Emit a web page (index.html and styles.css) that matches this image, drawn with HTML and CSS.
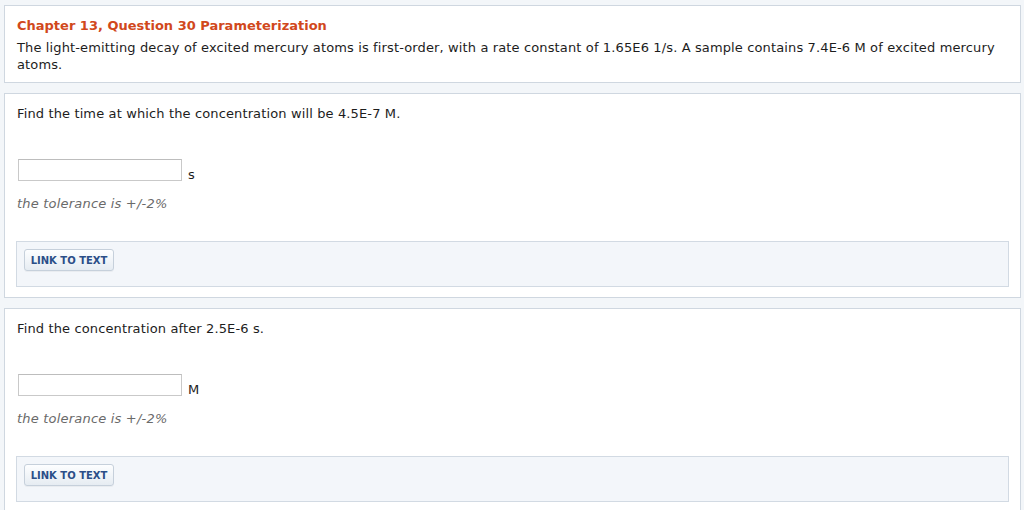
FILE: index.html
```html
<!DOCTYPE html>
<html>
<head>
<meta charset="utf-8">
<link rel="stylesheet" href="styles.css">
</head>
<body>
<div class="page">
  <section class="box intro">
    <h1 class="title">Chapter 13, Question 30 Parameterization</h1>
    <p class="text">The light-emitting decay of excited mercury atoms is first-order, with a rate constant of 1.65E6 1/s. A sample contains 7.4E-6 M of excited mercury atoms.</p>
  </section>

  <section class="box part">
    <p class="question">Find the time at which the concentration will be 4.5E-7 M.</p>
    <div class="answer">
      <input class="field" type="text">
      <span class="unit">s</span>
    </div>
    <p class="tolerance">the tolerance is +/-2%</p>
    <div class="links">
      <button class="link-btn">LINK TO TEXT</button>
    </div>
  </section>

  <section class="box part">
    <p class="question">Find the concentration after 2.5E-6 s.</p>
    <div class="answer">
      <input class="field" type="text">
      <span class="unit">M</span>
    </div>
    <p class="tolerance">the tolerance is +/-2%</p>
    <div class="links">
      <button class="link-btn">LINK TO TEXT</button>
    </div>
  </section>
</div>
</body>
</html>
```

FILE: styles.css
```css
html, body {
  margin: 0;
  padding: 0;
  background: #f3f6f9;
  font-family: Verdana, "DejaVu Sans", sans-serif;
  font-size: 13px;
  line-height: 17px;
  color: #1d1d1d;
}

.page {
  padding: 5px 3px 0 4px;
  display: flex;
  flex-direction: column;
  gap: 10px;
}

.box {
  background: #fff;
  border: 1px solid #cfd7e0;
}

.intro {
  padding: 11px 12px 9px 12px;
}

.title {
  margin: 0 0 5px 0;
  font-size: 13px;
  line-height: 17px;
  font-weight: bold;
  color: #d1481c;
}

.text {
  margin: 0;
  letter-spacing: 0.13px;
}

.part {
  padding: 11px 11px 10px 11px;
}

.question {
  margin: 0 0 37px 1px;
  letter-spacing: 0.13px;
}

.answer {
  display: flex;
  align-items: flex-end;
  gap: 6px;
  margin-left: 2px;
}

.field {
  width: 164px;
  height: 22px;
  box-sizing: border-box;
  border: 1px solid #c9c9c9;
  border-top-color: #bdbdbd;
  background: #fff;
  margin: 0;
  padding: 0 4px;
  font-family: inherit;
  font-size: 13px;
}

.unit {
  font-size: 13px;
  line-height: 15px;
  margin-bottom: -1px;
}

.tolerance {
  margin: 14px 0 0 1px;
  font-style: italic;
  color: #6a6a6a;
  letter-spacing: 0.2px;
}

.links {
  margin-top: 29px;
  background: #f3f6fa;
  border: 1px solid #d2dae3;
  padding: 7px 0 0 7px;
  box-sizing: content-box;
  height: 37px;
}

.link-btn {
  height: 22px;
  width: 90px;
  padding: 0;
  border: 1px solid #c6d0db;
  border-radius: 3px;
  background: linear-gradient(#fdfeff, #e6ecf2);
  box-shadow: 0 1px 0 rgba(0, 0, 0, 0.04);
  color: #2b4e88;
  font-family: Verdana, "DejaVu Sans", sans-serif;
  font-size: 10px;
  font-weight: bold;
  letter-spacing: 0;
}
```
